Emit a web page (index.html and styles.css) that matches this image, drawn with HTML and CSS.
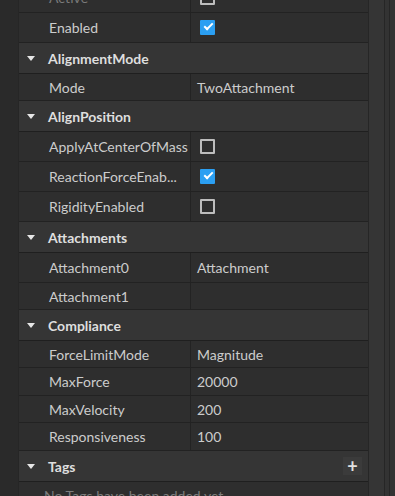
FILE: index.html
```html
<!DOCTYPE html>
<html>
<head>
	<meta charset="UTF-8">
	<title>Properties</title>
	<link rel="stylesheet" href="styles.css">
</head>
<body>
	<div class="window">
		<div class="gutter"></div>

		<div class="panel">
			<div class="list">
				<div class="row">
					<div class="name dim">Active</div>
					<div class="value"><span class="check"></span></div>
				</div>
				<div class="row">
					<div class="name">Enabled</div>
					<div class="value"><span class="check on"></span></div>
				</div>

				<div class="section"><span class="caret"></span>AlignmentMode</div>
				<div class="row short">
					<div class="name">Mode</div>
					<div class="value">TwoAttachment</div>
				</div>

				<div class="section"><span class="caret"></span>AlignPosition</div>
				<div class="row">
					<div class="name">ApplyAtCenterOfMass</div>
					<div class="value"><span class="check"></span></div>
				</div>
				<div class="row">
					<div class="name" title="ReactionForceEnabled">ReactionForceEnab...</div>
					<div class="value"><span class="check on"></span></div>
				</div>
				<div class="row">
					<div class="name">RigidityEnabled</div>
					<div class="value"><span class="check"></span></div>
				</div>

				<div class="section"><span class="caret"></span>Attachments</div>
				<div class="row">
					<div class="name">Attachment0</div>
					<div class="value">Attachment</div>
				</div>
				<div class="row short">
					<div class="name">Attachment1</div>
					<div class="value"></div>
				</div>

				<div class="section"><span class="caret"></span>Compliance</div>
				<div class="row short">
					<div class="name">ForceLimitMode</div>
					<div class="value">Magnitude</div>
				</div>
				<div class="row mid">
					<div class="name">MaxForce</div>
					<div class="value">20000</div>
				</div>
				<div class="row short">
					<div class="name">MaxVelocity</div>
					<div class="value">200</div>
				</div>
				<div class="row mid">
					<div class="name">Responsiveness</div>
					<div class="value">100</div>
				</div>

				<div class="section"><span class="caret"></span>Tags<span class="add">+</span></div>
				<div class="empty">No Tags have been added yet.</div>
			</div>
		</div>

		<div class="scrollbar">
			<div class="track"></div>
			<div class="rail"></div>
			<div class="rail wide"></div>
		</div>
	</div>
</body>
</html>
```

FILE: styles.css
```css
body {
	margin: 0;
	background-color: #2e2e2e;
	font-family: Lato, "Noto Sans", sans-serif;
	font-size: 14px;
	color: #cccccc;
	overflow: hidden;
}

.window {
	display: flex;
	height: 496px;
	overflow: hidden;
}

.gutter {
	width: 18px;
	flex: none;
	background-color: #2a2a2a;
	border-right: 1px solid #262626;
}

.panel {
	width: 349px;
	flex: none;
	overflow: hidden;
	background-color: #2e2e2e;
}

.list {
	margin-top: -17px;
}

.row {
	display: grid;
	grid-template-columns: 172px 1fr;
	height: 30px;
	box-sizing: border-box;
	border-bottom: 1px solid #222222;
}

.row.short { height: 27px; }
.row.mid { height: 28px; }

.name {
	display: flex;
	align-items: center;
	padding-left: 30px;
	padding-right: 6px;
	border-right: 1px solid #232323;
	white-space: nowrap;
	overflow: hidden;
	min-width: 0;
}

.name.dim { color: #7a7a7a; }

.value {
	display: flex;
	align-items: center;
	padding-left: 6px;
	white-space: nowrap;
}

.check {
	width: 15px;
	height: 15px;
	box-sizing: border-box;
	margin-left: 3px;
	border: 2px solid #bdbdbd;
	border-radius: 1px;
}

.check.on {
	border: none;
	background-color: #2b9ff2;
	position: relative;
}

.check.on::after {
	content: "";
	position: absolute;
	left: 4px;
	top: 3px;
	width: 7px;
	height: 3px;
	border-left: 2px solid #ffffff;
	border-bottom: 2px solid #ffffff;
	transform: rotate(-45deg);
}

.section {
	display: flex;
	align-items: center;
	height: 31px;
	box-sizing: border-box;
	padding-left: 8px;
	padding-right: 6px;
	background-color: #353535;
	border-bottom: 1px solid #1f1f1f;
	font-weight: bold;
	color: #dedede;
}

.caret {
	width: 0;
	height: 0;
	margin-right: 13px;
	border-left: 4.5px solid transparent;
	border-right: 4.5px solid transparent;
	border-top: 5px solid #e6e6e6;
}

.add {
	margin-left: auto;
	width: 19px;
	height: 18px;
	display: flex;
	align-items: center;
	justify-content: center;
	background-color: #3b3b3b;
	color: #e0e0e0;
	font-size: 18px;
	font-weight: bold;
	line-height: 1;
}

.empty {
	padding: 5px 0 0 25px;
	color: #7c7c7c;
}

.scrollbar {
	flex: 1;
	display: flex;
	background-color: #2f2f2f;
	border-left: 1px solid #262626;
}

.track {
	width: 15px;
	background-color: #353535;
	border-right: 1px solid #262626;
}

.rail {
	width: 4px;
	background-color: #333333;
	border-right: 1px solid #262626;
}

.rail.wide {
	flex: 1;
	border-right: none;
}
```
